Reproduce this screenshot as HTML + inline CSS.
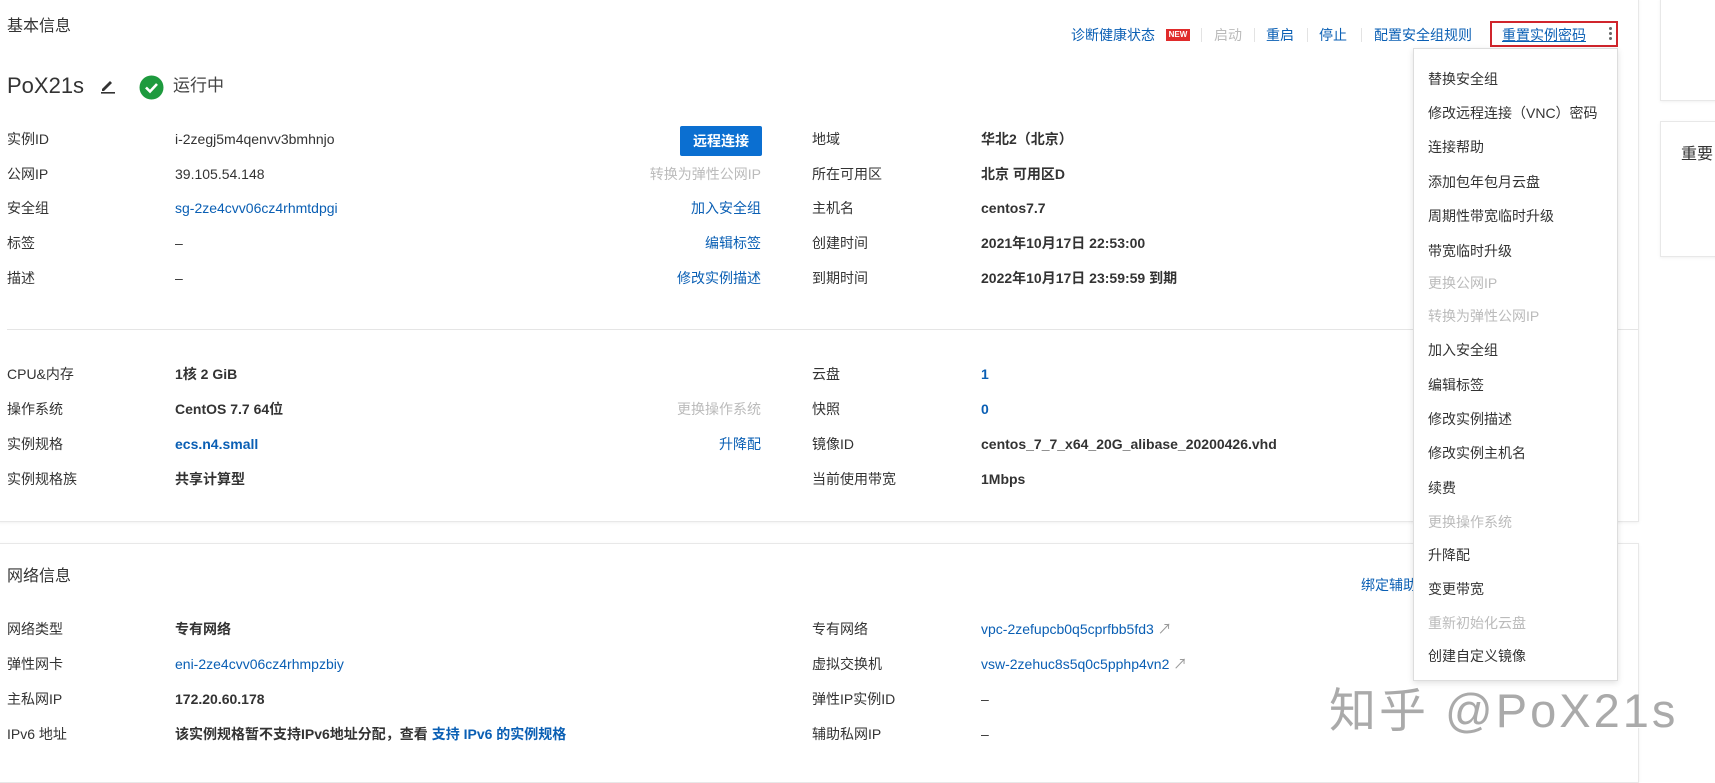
<!DOCTYPE html>
<html><head><meta charset="utf-8"><style>
*{margin:0;padding:0;box-sizing:border-box}
body{width:1715px;height:776px;overflow:hidden;background:#fff;font-family:"Liberation Sans","Noto Sans CJK SC",sans-serif;font-size:14px;color:#333;position:relative}
.a{position:absolute;white-space:nowrap;line-height:18px}
.l{color:#0a5fb4}
.g{color:#bbb}
.b{font-weight:bold;color:#333}
.card{position:absolute;border:1px solid #e8e8e8;box-shadow:0 1px 3px rgba(0,0,0,.06);background:#fff}
.dd{position:absolute;left:1413px;top:48px;width:205px;height:633px;background:#fff;border:1px solid #ddd;box-shadow:0 2px 6px rgba(0,0,0,.12)}
.dd div{position:absolute;left:14px;white-space:nowrap;font-size:14px;line-height:18px;color:#333}
.dd .g{color:#bbb}
.sep{position:absolute;top:28px;width:1px;height:14px;background:#e3e3e3}
</style></head><body>
<div class="card" style="left:-2px;top:-2px;width:1641px;height:524px;border-top:none"></div>
<div class="card" style="left:-2px;top:543px;width:1641px;height:240px"></div>
<div class="card" style="left:1660px;top:-2px;width:60px;height:103px"></div>
<div class="card" style="left:1660px;top:121px;width:60px;height:136px"></div>
<div class="a" style="left:1681px;top:146px;font-size:16px">重要</div>

<div class="a" style="left:7px;top:18px;font-size:16px">基本信息</div>
<div class="a l" style="left:1071px;top:26px">诊断健康状态</div>
<div class="a" style="left:1166px;top:29px;width:24px;height:12px;background:#e02b2b;color:#fff;font-size:8px;line-height:12px;text-align:center;font-weight:bold">NEW</div>
<div class="sep" style="left:1201px"></div>
<div class="a g" style="left:1214px;top:26px">启动</div>
<div class="sep" style="left:1254px"></div>
<div class="a l" style="left:1266px;top:26px">重启</div>
<div class="sep" style="left:1307px"></div>
<div class="a l" style="left:1319px;top:26px">停止</div>
<div class="sep" style="left:1361px"></div>
<div class="a l" style="left:1374px;top:26px">配置安全组规则</div>
<div class="a" style="left:1490px;top:21px;width:128px;height:26px;border:2px solid #d0252c"></div>
<div class="a l" style="left:1502px;top:26px;text-decoration:underline">重置实例密码</div>
<div class="a" style="left:1609px;top:27px;width:3px;height:3px;background:#666;border-radius:50%;box-shadow:0 5px 0 #666,0 10px 0 #666"></div>

<div class="a" style="left:7px;top:73px;font-size:22px;line-height:26px">PoX21s</div>
<svg class="a" style="left:99px;top:76px" width="18" height="18" viewBox="0 0 18 18"><path d="M3 13 L11 5 L13 7 L5 15 L3 15Z" fill="#333"/><rect x="2" y="16" width="14" height="1.6" fill="#333"/></svg>
<svg class="a" style="left:139px;top:75px" width="25" height="25" viewBox="0 0 25 25"><circle cx="12.5" cy="12.5" r="12" fill="#1e9a3e"/><path d="M7 12.5 L11 16.5 L18 9" stroke="#fff" stroke-width="2.6" fill="none"/></svg>
<div class="a" style="left:173px;top:76px;font-size:17px;line-height:20px;color:#444">运行中</div>

<div class="a" style="left:7px;top:130px">实例ID</div><div class="a" style="left:175px;top:130px">i-2zegj5m4qenvv3bmhnjo</div>
<div class="a" style="left:680px;top:126px;width:82px;height:30px;background:#0b6fd1;color:#fff;font-weight:bold;text-align:center;line-height:30px;border-radius:2px">远程连接</div>
<div class="a" style="left:7px;top:165px">公网IP</div><div class="a" style="left:175px;top:165px">39.105.54.148</div><div class="a g" style="right:954px;top:165px">转换为弹性公网IP</div>
<div class="a" style="left:7px;top:199px">安全组</div><div class="a l" style="left:175px;top:199px">sg-2ze4cvv06cz4rhmtdpgi</div><div class="a l" style="right:954px;top:199px">加入安全组</div>
<div class="a" style="left:7px;top:234px">标签</div><div class="a" style="left:175px;top:234px">–</div><div class="a l" style="right:954px;top:234px">编辑标签</div>
<div class="a" style="left:7px;top:269px">描述</div><div class="a" style="left:175px;top:269px">–</div><div class="a l" style="right:954px;top:269px">修改实例描述</div>

<div class="a" style="left:812px;top:130px">地域</div><div class="a b" style="left:981px;top:130px">华北2（北京）</div>
<div class="a" style="left:812px;top:165px">所在可用区</div><div class="a b" style="left:981px;top:165px">北京 可用区D</div>
<div class="a" style="left:812px;top:199px">主机名</div><div class="a b" style="left:981px;top:199px">centos7.7</div>
<div class="a" style="left:812px;top:234px">创建时间</div><div class="a b" style="left:981px;top:234px">2021年10月17日 22:53:00</div>
<div class="a" style="left:812px;top:269px">到期时间</div><div class="a b" style="left:981px;top:269px">2022年10月17日 23:59:59 到期</div>

<div class="a" style="left:7px;top:329px;width:1631px;height:1px;background:#e5e5e5"></div>

<div class="a" style="left:7px;top:365px">CPU&amp;内存</div><div class="a b" style="left:175px;top:365px">1核 2 GiB</div>
<div class="a" style="left:7px;top:400px">操作系统</div><div class="a b" style="left:175px;top:400px">CentOS 7.7 64位</div><div class="a g" style="right:954px;top:400px">更换操作系统</div>
<div class="a" style="left:7px;top:435px">实例规格</div><div class="a l b" style="left:175px;top:435px;color:#0a5fb4">ecs.n4.small</div><div class="a l" style="right:954px;top:435px">升降配</div>
<div class="a" style="left:7px;top:470px">实例规格族</div><div class="a b" style="left:175px;top:470px">共享计算型</div>
<div class="a" style="left:812px;top:365px">云盘</div><div class="a b" style="left:981px;top:365px;color:#0a5fb4">1</div>
<div class="a" style="left:812px;top:400px">快照</div><div class="a b" style="left:981px;top:400px;color:#0a5fb4">0</div>
<div class="a" style="left:812px;top:435px">镜像ID</div><div class="a b" style="left:981px;top:435px">centos_7_7_x64_20G_alibase_20200426.vhd</div>
<div class="a" style="left:812px;top:470px">当前使用带宽</div><div class="a b" style="left:981px;top:470px">1Mbps</div>

<div class="a" style="left:7px;top:568px;font-size:16px">网络信息</div>
<div class="a l" style="left:1361px;top:576px">绑定辅助</div>
<div class="a" style="left:7px;top:620px">网络类型</div><div class="a b" style="left:175px;top:620px">专有网络</div>
<div class="a" style="left:7px;top:655px">弹性网卡</div><div class="a l" style="left:175px;top:655px">eni-2ze4cvv06cz4rhmpzbiy</div>
<div class="a" style="left:7px;top:690px">主私网IP</div><div class="a b" style="left:175px;top:690px">172.20.60.178</div>
<div class="a" style="left:7px;top:725px">IPv6 地址</div><div class="a b" style="left:175px;top:725px">该实例规格暂不支持IPv6地址分配，查看 <span style="color:#0a5fb4">支持 IPv6 的实例规格</span></div>
<div class="a" style="left:812px;top:620px">专有网络</div><div class="a l" style="left:981px;top:620px">vpc-2zefupcb0q5cprfbb5fd3 <span style="color:#999">↗</span></div>
<div class="a" style="left:812px;top:655px">虚拟交换机</div><div class="a l" style="left:981px;top:655px">vsw-2zehuc8s5q0c5pphp4vn2 <span style="color:#999">↗</span></div>
<div class="a" style="left:812px;top:690px">弹性IP实例ID</div><div class="a" style="left:981px;top:690px">–</div>
<div class="a" style="left:812px;top:725px">辅助私网IP</div><div class="a" style="left:981px;top:725px">–</div>

<div class="dd">
<div style="top:21px">替换安全组</div>
<div style="top:55px">修改远程连接（VNC）密码</div>
<div style="top:89px">连接帮助</div>
<div style="top:124px">添加包年包月云盘</div>
<div style="top:158px">周期性带宽临时升级</div>
<div style="top:193px">带宽临时升级</div>
<div class="g" style="top:225px">更换公网IP</div>
<div class="g" style="top:258px">转换为弹性公网IP</div>
<div style="top:292px">加入安全组</div>
<div style="top:327px">编辑标签</div>
<div style="top:361px">修改实例描述</div>
<div style="top:395px">修改实例主机名</div>
<div style="top:430px">续费</div>
<div class="g" style="top:464px">更换操作系统</div>
<div style="top:497px">升降配</div>
<div style="top:531px">变更带宽</div>
<div class="g" style="top:565px">重新初始化云盘</div>
<div style="top:598px">创建自定义镜像</div>
</div>

<div class="a" style="left:1329px;top:684px;font-size:47px;line-height:54px;color:#aaa;text-shadow:1px 1px 0 #fff,-1px -1px 0 #fff;letter-spacing:3px">知乎 @PoX21s</div>
</body></html>
